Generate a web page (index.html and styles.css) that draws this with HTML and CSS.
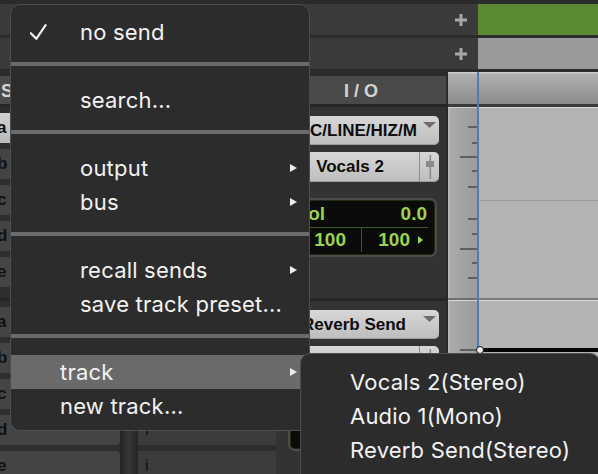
FILE: index.html
```html
<!DOCTYPE html>
<html>
<head>
<meta charset="utf-8">
<link rel="stylesheet" href="styles.css">
</head>
<body>
<div class="app">
  <div class="top-rows">
    <div class="trow">
      <div class="tname"><svg class="plus" viewBox="0 0 12 12"><path d="M4.5 0h3v4.5H12v3H7.5V12h-3V7.5H0v-3h4.5z"/></svg></div>
      <div class="clip clip-green"></div>
    </div>
    <div class="trow">
      <div class="tname"><svg class="plus" viewBox="0 0 12 12"><path d="M4.5 0h3v4.5H12v3H7.5V12h-3V7.5H0v-3h4.5z"/></svg></div>
      <div class="clip clip-grey"></div>
    </div>
  </div>

  <div class="header">
    <div class="h-cell h-left">S</div>
    <div class="h-gap"></div>
    <div class="h-cell h-io">I / O</div>
    <div class="h-gap"></div>
    <div class="ruler-head"></div>
  </div>

  <div class="lane lane-1">
    <div class="sends">
      <div class="send on">a</div>
      <div class="send">b</div>
      <div class="send">c</div>
      <div class="send">d</div>
      <div class="send">e</div>
    </div>
    <div class="band"></div>
    <div class="inserts">
      <div class="insert"></div>
      <div class="insert"></div>
      <div class="insert"></div>
      <div class="insert"></div>
      <div class="insert"></div>
    </div>
    <div class="io">
      <div class="btn">
        <span class="btn-label">MIC/LINE/HIZ/M</span>
        <span class="caret"><svg width="13" height="6" viewBox="0 0 13 6"><path d="M0 0h13L6.5 6z"/></svg></span>
      </div>
      <div class="btn btn-second">
        <span class="btn-label">Vocals 2</span>
        <span class="fader-sect"><svg width="19" height="30" viewBox="0 0 19 30"><rect x="9.5" y="3" width="1.6" height="24"/><rect x="6" y="9" width="8" height="6"/></svg></span>
      </div>
      <div class="display">
        <div class="d-top"><span>Vol</span><span>0.0</span></div>
        <div class="d-bot">
          <div class="d-cell d-left">100</div>
          <div class="d-cell d-right">100<svg class="d-tri" width="5" height="8" viewBox="0 0 5 8"><path d="M0 0l5 4-5 4z"/></svg></div>
        </div>
      </div>
    </div>
    <div class="gap"></div>
    <div class="ruler">
      <svg class="ticks" width="29" height="191" viewBox="0 0 29 191">
        <path d="M20 20H29M24 36H29M12 50H29M24 64H29M20 80H29M20 112H29M24 127H29M12 142H29M24 156H29M20 171H29"/>
      </svg>
    </div>
    <div class="timeline">
      <div class="t-line"></div>
    </div>
  </div>

  <div class="lane lane-2">
    <div class="sends">
      <div class="send">a</div>
      <div class="send">b</div>
      <div class="send">c</div>
      <div class="send">d</div>
      <div class="send">e</div>
    </div>
    <div class="band"></div>
    <div class="inserts">
      <div class="insert"></div>
      <div class="insert"></div>
      <div class="insert"></div>
      <div class="insert">i</div>
      <div class="insert">i</div>
    </div>
    <div class="io">
      <div class="btn">
        <span class="btn-label">Reverb Send</span>
        <span class="caret"><svg width="13" height="6" viewBox="0 0 13 6"><path d="M0 0h13L6.5 6z"/></svg></span>
      </div>
      <div class="btn btn-second">
        <span class="btn-label"></span>
        <span class="fader-sect"><svg width="19" height="30" viewBox="0 0 19 30"><rect x="9.5" y="3" width="1.6" height="24"/><rect x="6" y="9" width="8" height="6"/></svg></span>
      </div>
      <div class="display">
        <div class="d-top"></div>
        <div class="d-bot">
          <div class="d-cell d-left"></div>
          <div class="d-cell d-right"></div>
        </div>
      </div>
    </div>
    <div class="gap"></div>
    <div class="ruler">
      <svg class="ticks" width="29" height="191" viewBox="0 0 29 191">
        <path d="M12 50H29"/>
      </svg>
    </div>
    <div class="timeline">
      <div class="auto-line"></div>
      <div class="auto-dot"></div>
    </div>
  </div>
</div>

<div class="playhead"></div>

<div class="menu">
  <div class="mi"><span class="gutter"><svg class="check" width="18" height="18" viewBox="0 0 18 18"><path d="M0.8 10.2L6.3 15.8L15.6 2.2"/></svg></span><span class="mtext">no send</span></div>
  <div class="msep"></div>
  <div class="mi"><span class="gutter"></span><span class="mtext">search...</span></div>
  <div class="msep"></div>
  <div class="mi"><span class="gutter"></span><span class="mtext">output</span><svg class="arrow" width="7" height="8" viewBox="0 0 7 8"><path d="M0 0l7 4-7 4z"/></svg></div>
  <div class="mi"><span class="gutter"></span><span class="mtext">bus</span><svg class="arrow" width="7" height="8" viewBox="0 0 7 8"><path d="M0 0l7 4-7 4z"/></svg></div>
  <div class="msep"></div>
  <div class="mi"><span class="gutter"></span><span class="mtext">recall sends</span><svg class="arrow" width="7" height="8" viewBox="0 0 7 8"><path d="M0 0l7 4-7 4z"/></svg></div>
  <div class="mi"><span class="gutter"></span><span class="mtext">save track preset...</span></div>
  <div class="msep"></div>
  <div class="mi hl"><span class="gutter short"></span><span class="mtext">track</span><svg class="arrow" width="7" height="8" viewBox="0 0 7 8"><path d="M0 0l7 4-7 4z"/></svg></div>
  <div class="mi"><span class="gutter short"></span><span class="mtext">new track...</span></div>
</div>

<div class="submenu">
  <div class="si">Vocals 2(Stereo)</div>
  <div class="si">Audio 1(Mono)</div>
  <div class="si">Reverb Send(Stereo)</div>
</div>
</body>
</html>
```

FILE: styles.css
```css
* { box-sizing: border-box; }

body {
  margin: 0;
  width: 598px;
  height: 474px;
  overflow: hidden;
  position: relative;
  background: #2b2b2b;
  font-family: "Liberation Sans", Arial, sans-serif;
}

.app { padding-top: 4px; }

/* top track rows */
.top-rows { display: flex; flex-direction: column; gap: 3px; }
.trow { display: grid; grid-template-columns: 478px 120px; height: 31px; }
.tname {
  background: #3a3a3a;
  display: flex;
  align-items: center;
  justify-content: flex-end;
  padding-right: 11px;
}
.plus { width: 12px; height: 12px; display: block; fill: #a8a8a8; }
.clip-green { background: #5b8a33; }
.clip-grey { background: #9a9a9a; }

/* header */
.header {
  display: grid;
  grid-template-columns: 274px 2px 170px 2px 150px;
  height: 32px;
  margin-top: 3px;
}
.h-cell {
  margin-top: 4px;
  background: #4a4a4a;
  color: #d4d4d4;
  font-weight: bold;
  font-size: 18px;
  line-height: 30px;
  white-space: nowrap;
  overflow: hidden;
}
.h-left { padding-left: 1px; }
.h-io { text-align: center; }
.ruler-head {
  background: linear-gradient(#cdcdcd 0, #cdcdcd 1px, #b0b0b0 2px, #a2a2a2 40%, #8c8c8c 100%);
}

/* lanes */
.lane {
  display: grid;
  grid-template-columns: 120px 18px 138px 170px 2px 29px 121px;
  height: 194px;
}
.lane > * { border-top: 3px solid #262626; }

.sends, .inserts {
  background: #2e2e2e;
  display: flex;
  flex-direction: column;
  gap: 6px;
  padding-top: 6px;
  overflow: hidden;
}
.send {
  height: 30px;
  flex: none;
  background: #444444;
  color: #111;
  font-weight: bold;
  font-size: 17px;
  line-height: 30px;
  text-indent: -3px;
  border-radius: 0 4px 4px 0;
}
.send.on { background: linear-gradient(#d0d0d0, #b9b9b9); }
.band {
  background: linear-gradient(to right, #232323, #363636 45%, #363636 55%, #232323);
}
.insert {
  height: 30px;
  flex: none;
  background: #3c3c3c;
  color: #111;
  font-size: 16px;
  line-height: 30px;
  padding-left: 7px;
}

.io {
  background: #333333;
  padding-top: 9px;
  display: flex;
  flex-direction: column;
}
.btn {
  display: flex;
  height: 29px;
  margin: 0 7px 0 13px;
  border-radius: 5px;
  background: linear-gradient(#d7d7d7, #bdbdbd);
  box-shadow: inset 0 -1px #9c9c9c;
  color: #0c0c0c;
  font-weight: bold;
  font-size: 17px;
  overflow: hidden;
}
.btn-second { margin-top: 7px; height: 30px; }
.btn-label {
  flex: 1;
  display: flex;
  align-items: center;
  justify-content: center;
  white-space: nowrap;
  overflow: hidden;
}
.btn-second .btn-label { padding-right: 8px; }
.caret { width: 20px; padding: 6px 0 0 4px; }
.caret svg { display: block; fill: #6f6f6f; }
.fader-sect { width: 20px; border-left: 1px solid #8e8e8e; }
.fader-sect svg { display: block; fill: #8a8a8a; }

.display {
  margin: 16px 9px 0 12px;
  height: 59px;
  border-radius: 7px;
  border: 2px solid #4c4c4c;
  background: #0b0b0b;
  box-shadow: inset 0 0 0 1px #1d2e12;
  display: flex;
  flex-direction: column;
  color: #9bd44a;
  font-weight: bold;
  font-size: 19px;
}
.d-top {
  height: 28px;
  flex: none;
  display: flex;
  justify-content: space-between;
  align-items: center;
  margin: 0 7px 0 2px;
  padding: 0 1px 0 5px;
  border-bottom: 1px solid #3d5a26;
}
.d-bot { flex: 1; display: flex; margin: 0 7px 0 2px; padding-bottom: 3px; }
.d-cell { display: flex; align-items: center; justify-content: flex-end; }
.d-left { width: 70px; padding-right: 15px; border-right: 1px solid #3d5a26; }
.d-right { flex: 1; padding-right: 5px; }
.d-tri { margin-left: 8px; fill: #9bd44a; }

.gap { background: #2a2a2a; }

.ruler {
  border-top-color: #3a3a3a;
  background: linear-gradient(to right, #bdbdbd 0, #aaaaaa 2px, #9c9c9c 100%);
  box-shadow: inset 0 1px #d2d2d2;
}
.ticks { display: block; stroke: #5f5f5f; stroke-width: 2; fill: none; }

.timeline {
  border-top-color: #3a3a3a;
  background: #b3b3b3;
  box-shadow: inset 0 1px #d6d6d6;
  position: relative;
}
.t-line { margin-top: 93px; height: 1px; background: #9b9b9b; }

.lane-2 .ruler, .lane-2 .timeline {
  border-top: 2px solid #7a7a7a;
  box-shadow: inset 0 1px #d8d8d8;
}
.lane-2 .ruler { border-top-color: #6e6e6e; }
.auto-line { margin: 48px 0 0 2px; height: 4px; background: #050505; }
.auto-dot {
  position: absolute;
  left: -1px;
  top: 46px;
  width: 8px;
  height: 8px;
  border-radius: 50%;
  background: #f4f4f4;
  border: 1.5px solid #111;
  z-index: 2;
}

.playhead {
  position: absolute;
  left: 477px;
  top: 72px;
  width: 2px;
  height: 402px;
  background: #4c7eb2;
  z-index: 1;
}

/* popup menu */
.menu {
  position: absolute;
  left: 10px;
  top: 4px;
  width: 300px;
  padding: 10px 0 7px;
  background: #2c2c2c;
  border: 1px solid #4e4e4e;
  border-radius: 10px;
  z-index: 3;
  font-family: Inter, "Noto Sans", sans-serif;
  font-size: 22px;
  letter-spacing: 0.2px;
  color: #f2f2f2;
}
.mi {
  height: 34px;
  display: flex;
  align-items: center;
  padding-left: 19px;
}
.mi.hl { background: #6a6a6a; }
.gutter { width: 50px; flex: none; display: flex; align-items: center; }
.gutter.short { width: 30px; }
.check { display: block; fill: none; stroke: #f2f2f2; stroke-width: 2.2; stroke-linecap: round; stroke-linejoin: round; }
.mtext { flex: 1; white-space: nowrap; }
.arrow { margin-right: 12px; fill: #ececec; flex: none; }
.msep { height: 4px; margin: 13px 0 17px; background: #6b6b6b; }

.submenu {
  position: absolute;
  left: 300px;
  top: 353px;
  width: 300px;
  height: 140px;
  padding-top: 11px;
  background: #2c2c2c;
  border: 1px solid #4e4e4e;
  border-radius: 10px;
  z-index: 4;
  font-family: Inter, "Noto Sans", sans-serif;
  font-size: 22px;
  letter-spacing: 0.2px;
  color: #f2f2f2;
}
.si { height: 34px; display: flex; align-items: center; padding-left: 49px; white-space: nowrap; }
```
